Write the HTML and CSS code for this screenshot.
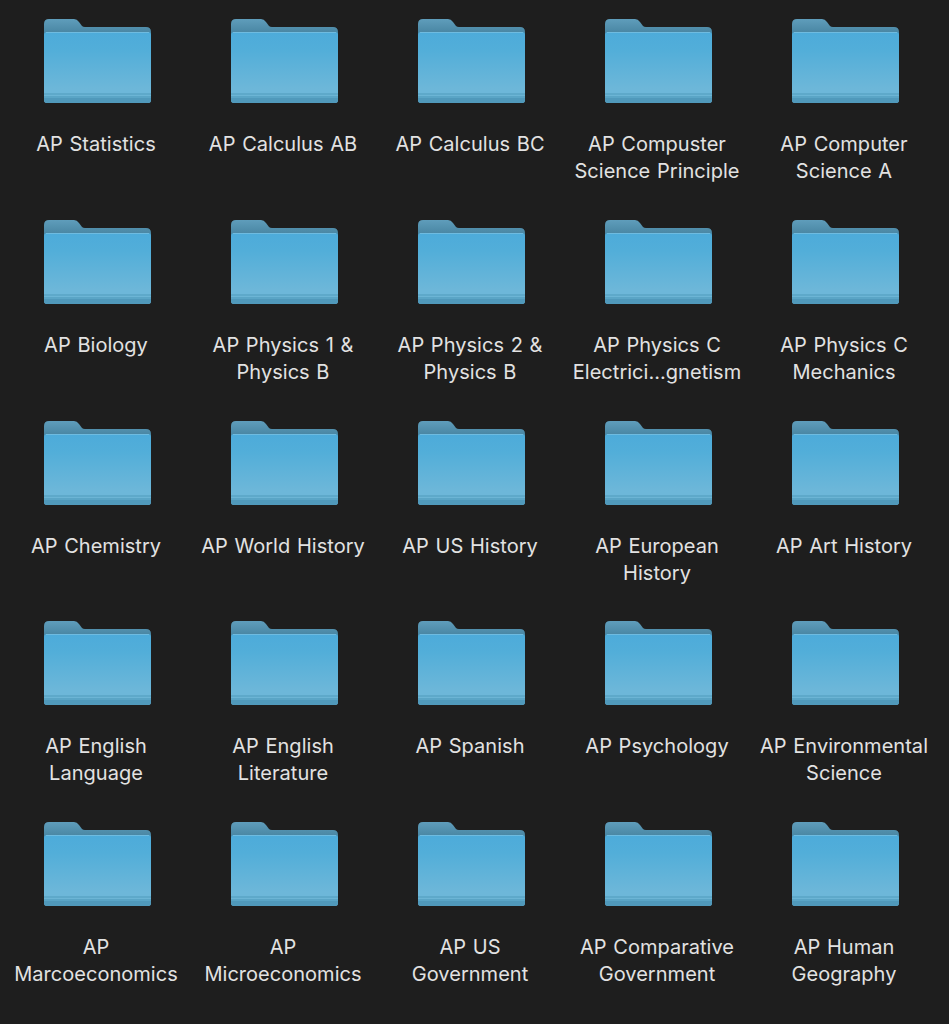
FILE: index.html
```html
<!DOCTYPE html>
<html lang="en">

<head>
  <meta charset="UTF-8" />
  <title>AP Courses</title>
  <link rel="stylesheet" href="styles.css">
</head>

<body>
  <svg class="defs" width="0" height="0" aria-hidden="true">
    <defs>
      <linearGradient id="back" x1="0" y1="0" x2="0" y2="1">
        <stop offset="0" stop-color="#5f9dbb" />
        <stop offset="0.22" stop-color="#4a87a4" />
      </linearGradient>
      <linearGradient id="front" x1="0" y1="0" x2="0" y2="1">
        <stop offset="0" stop-color="#4dabda" />
        <stop offset="0.25" stop-color="#52aed9" />
        <stop offset="0.8" stop-color="#6db7d9" />
        <stop offset="1" stop-color="#6db7d9" />
      </linearGradient>
      <symbol id="folder" viewBox="0 0 107 84">
        <path d="M0 5 Q0 0 5 0 H30 Q33 0 35 3 L38 7 Q39 8 41 8 H102 Q107 8 107 13 V60 H0 Z" fill="url(#back)" />
        <path d="M0 16 Q0 13 3 13 H104 Q107 13 107 16 V81 Q107 84 104 84 H3 Q0 84 0 81 Z" fill="url(#front)" />
        <path d="M2 13.5 H105" stroke="#86c6e4" stroke-width="1" fill="none" opacity="0.6" />
        <rect x="0" y="74" width="107" height="2" fill="#5ea9ca" />
        <rect x="0" y="76" width="107" height="1" fill="#6cb5d5" />
        <rect x="0" y="77" width="107" height="2" fill="#5aa5c6" />
        <path d="M0 79 H107 V81 Q107 84 104 84 H3 Q0 84 0 81 Z" fill="#5099bb" />
      </symbol>
    </defs>
  </svg>

  <main class="grid">
    <div class="item"><svg class="folder"><use href="#folder" /></svg><p>AP Statistics</p></div>
    <div class="item"><svg class="folder"><use href="#folder" /></svg><p>AP Calculus AB</p></div>
    <div class="item"><svg class="folder"><use href="#folder" /></svg><p>AP Calculus BC</p></div>
    <div class="item"><svg class="folder"><use href="#folder" /></svg><p>AP Compuster<br>Science Principle</p></div>
    <div class="item"><svg class="folder"><use href="#folder" /></svg><p>AP Computer<br>Science A</p></div>

    <div class="item"><svg class="folder"><use href="#folder" /></svg><p>AP Biology</p></div>
    <div class="item"><svg class="folder"><use href="#folder" /></svg><p>AP Physics 1 &amp;<br>Physics B</p></div>
    <div class="item"><svg class="folder"><use href="#folder" /></svg><p>AP Physics 2 &amp;<br>Physics B</p></div>
    <div class="item"><svg class="folder"><use href="#folder" /></svg><p>AP Physics C<br>Electrici...gnetism</p></div>
    <div class="item"><svg class="folder"><use href="#folder" /></svg><p>AP Physics C<br>Mechanics</p></div>

    <div class="item"><svg class="folder"><use href="#folder" /></svg><p>AP Chemistry</p></div>
    <div class="item"><svg class="folder"><use href="#folder" /></svg><p>AP World History</p></div>
    <div class="item"><svg class="folder"><use href="#folder" /></svg><p>AP US History</p></div>
    <div class="item"><svg class="folder"><use href="#folder" /></svg><p>AP European<br>History</p></div>
    <div class="item"><svg class="folder"><use href="#folder" /></svg><p>AP Art History</p></div>

    <div class="item"><svg class="folder"><use href="#folder" /></svg><p>AP English<br>Language</p></div>
    <div class="item"><svg class="folder"><use href="#folder" /></svg><p>AP English<br>Literature</p></div>
    <div class="item"><svg class="folder"><use href="#folder" /></svg><p>AP Spanish</p></div>
    <div class="item"><svg class="folder"><use href="#folder" /></svg><p>AP Psychology</p></div>
    <div class="item"><svg class="folder"><use href="#folder" /></svg><p>AP Environmental<br>Science</p></div>

    <div class="item"><svg class="folder"><use href="#folder" /></svg><p>AP<br>Marcoeconomics</p></div>
    <div class="item"><svg class="folder"><use href="#folder" /></svg><p>AP<br>Microeconomics</p></div>
    <div class="item"><svg class="folder"><use href="#folder" /></svg><p>AP US<br>Government</p></div>
    <div class="item"><svg class="folder"><use href="#folder" /></svg><p>AP Comparative<br>Government</p></div>
    <div class="item"><svg class="folder"><use href="#folder" /></svg><p>AP Human<br>Geography</p></div>
  </main>
</body>

</html>
```

FILE: styles.css
```css
* {
  margin: 0;
  padding: 0;
  box-sizing: border-box;
}

html, body {
  width: 100%;
  height: 100%;
  overflow: hidden;
  background: #1e1e1e;
  font-family: Inter, "Liberation Sans", sans-serif;
}

.defs {
  position: absolute;
}

.grid {
  display: grid;
  grid-template-columns: repeat(5, 187px);
  grid-auto-rows: 200.75px;
  padding: 19px 0 0 2.5px;
}

.item {
  display: flex;
  flex-direction: column;
  align-items: center;
}

.folder {
  width: 107px;
  height: 84px;
  margin-left: 2px;
  display: block;
}

.item p {
  margin-top: 28px;
  font-size: 20px;
  line-height: 27px;
  letter-spacing: 0.03px;
  word-spacing: 1px;
  color: #e2e2e2;
  text-align: center;
  white-space: nowrap;
}
```
